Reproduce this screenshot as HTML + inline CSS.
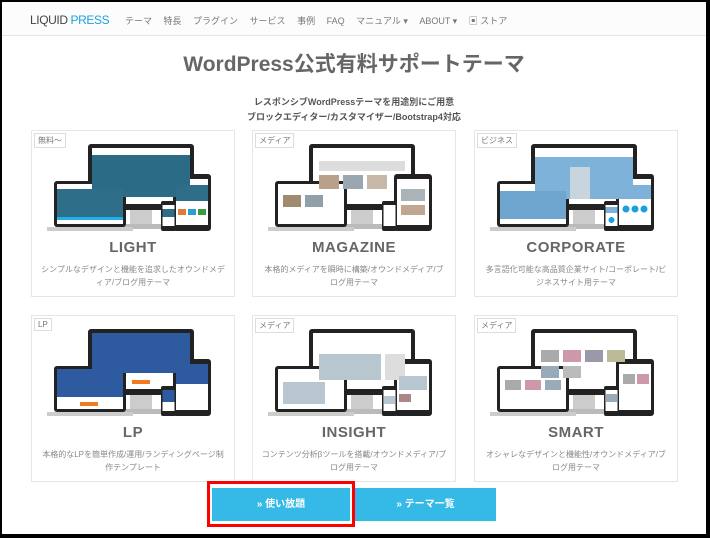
<!DOCTYPE html>
<html><head><meta charset="utf-8"><style>
*{margin:0;padding:0;box-sizing:border-box}
body{width:710px;height:538px;overflow:hidden;background:#000;font-family:"Liberation Sans","Noto Sans CJK JP",sans-serif;position:relative}
.page{position:absolute;left:2px;top:2px;width:704px;height:532px;background:#fff}
.nav{position:absolute;left:0;top:0;width:704px;height:34px;background:#fcfcfc;border-bottom:1px solid #e6e6e6}
.logo{position:absolute;left:28px;top:11px;font-size:12px;color:#444;letter-spacing:-.4px}
.logo b{font-weight:normal;color:#1aa3dc}
.menu{position:absolute;left:123px;top:12px;font-size:9px;color:#777;white-space:nowrap}
.menu span{margin-right:11.5px}
h1{position:absolute;left:0;width:704px;top:46px;text-align:center;font-size:21px;color:#666;font-weight:bold}
.sub{position:absolute;left:0;width:704px;top:93px;text-align:center;font-size:9px;color:#555;font-weight:bold;line-height:15px}
.card{position:absolute;width:204px;height:167px;border:1px solid #e6e6e6;background:#fff}
.tag{position:absolute;left:2px;top:2px;border:1px solid #ddd;font-size:8px;color:#777;padding:1px 3px;background:#fff}
.card svg{position:absolute;left:0;top:0}
.ttl{position:absolute;left:0;width:100%;top:108px;text-align:center;font-size:15px;font-weight:bold;color:#666;letter-spacing:.5px}
.desc{position:absolute;left:8px;right:8px;top:132px;text-align:center;font-size:8px;color:#888;line-height:13px}
.red{position:absolute;left:205px;top:479px;width:148px;height:46px;border:3px solid #f00}
.btn{position:absolute;top:486px;height:33px;background:#35bae8;color:#fff;font-size:10px;text-align:center;line-height:33px;font-weight:bold}
</style></head><body><div class="page">
<div class="nav"><div class="logo">LIQUID <b>PRESS</b></div>
<div class="menu"><span>テーマ</span><span>特長</span><span>プラグイン</span><span>サービス</span><span>事例</span><span>FAQ</span><span>マニュアル ▾</span><span>ABOUT ▾</span><span>▣ ストア</span></div></div>
<h1>WordPress公式有料サポートテーマ</h1>
<div class="sub">レスポンシブWordPressテーマを用途別にご用意<br>ブロックエディター/カスタマイザー/Bootstrap4対応</div>

<svg width="0" height="0" style="position:absolute"><defs>
<g id="dev">
<rect x="56" y="13" width="106" height="66" rx="3" fill="#222"/>
<rect x="60" y="17" width="98" height="56" fill="#fff"/>
<rect x="98" y="79" width="22" height="14" fill="#ccc"/><rect x="88" y="93" width="42" height="5" fill="#bbb"/>
<rect x="22" y="50" width="72" height="46" rx="3" fill="#222"/>
<rect x="25" y="53" width="66" height="40" fill="#fff"/>
<rect x="15" y="96" width="86" height="4" fill="#ccc"/>
<rect x="141" y="43" width="38" height="57" rx="3" fill="#222"/>
<rect x="144" y="48" width="32" height="46" fill="#fff"/>
<rect x="129" y="70" width="15" height="30" rx="2" fill="#222"/>
<rect x="130.5" y="74" width="12" height="21" fill="#fff"/>
</g></defs></svg>

<div class="card" style="left:29px;top:128px"><div class="tag">無料～</div>
<svg width="204" height="110"><use href="#dev"/><rect x="60" y="24" width="98" height="42" fill="#2b6b86"/><rect x="25" y="58" width="66" height="28" fill="#2e6e88"/><rect x="144" y="54" width="32" height="16" fill="#2e6e88"/><rect x="146" y="78" width="8" height="6" fill="#e07a3a"/><rect x="156" y="78" width="8" height="6" fill="#2aa0d0"/><rect x="166" y="78" width="8" height="6" fill="#3a9a40"/><rect x="130.5" y="78" width="12" height="8" fill="#2e6e88"/><rect x="25" y="86" width="66" height="3" fill="#22b0e8"/></svg>
<div class="ttl">LIGHT</div><div class="desc">シンプルなデザインと機能を追求したオウンドメディア/ブログ用テーマ</div></div>

<div class="card" style="left:250px;top:128px"><div class="tag">メディア</div>
<svg width="204" height="110"><use href="#dev"/><rect x="66" y="30" width="86" height="10" fill="#ddd"/><rect x="66" y="44" width="20" height="14" fill="#b9a08a"/><rect x="90" y="44" width="20" height="14" fill="#9aa7b0"/><rect x="114" y="44" width="20" height="14" fill="#c7b7a8"/><rect x="30" y="64" width="18" height="12" fill="#a08a70"/><rect x="52" y="64" width="18" height="12" fill="#8fa0a8"/><rect x="148" y="58" width="24" height="12" fill="#aab3b8"/><rect x="148" y="74" width="24" height="10" fill="#c0a890"/></svg>
<div class="ttl">MAGAZINE</div><div class="desc">本格的メディアを瞬時に構築/オウンドメディア/ブログ用テーマ</div></div>

<div class="card" style="left:472px;top:128px"><div class="tag">ビジネス</div>
<svg width="204" height="110"><use href="#dev"/><rect x="60" y="26" width="98" height="42" fill="#7fb2d8"/><rect x="95" y="36" width="20" height="32" fill="#c8d4de"/><rect x="25" y="60" width="66" height="28" fill="#6fa6d0"/><rect x="144" y="54" width="32" height="14" fill="#7fb2d8"/><circle cx="151" cy="78" r="3.5" fill="#1aa0e0"/><circle cx="160" cy="78" r="3.5" fill="#1aa0e0"/><circle cx="169" cy="78" r="3.5" fill="#1aa0e0"/><rect x="130.5" y="76" width="12" height="6" fill="#7fb2d8"/><circle cx="136.5" cy="89" r="3" fill="#1aa0e0"/></svg>
<div class="ttl">CORPORATE</div><div class="desc">多言語化可能な高品質企業サイト/コーポレート/ビジネスサイト用テーマ</div></div>

<div class="card" style="left:29px;top:313px"><div class="tag">LP</div>
<svg width="204" height="110"><use href="#dev"/><rect x="60" y="17" width="98" height="40" fill="#2e5ba0"/><rect x="25" y="53" width="66" height="28" fill="#2e5ba0"/><rect x="48" y="86" width="18" height="4" fill="#f07a20"/><rect x="144" y="48" width="32" height="20" fill="#2e5ba0"/><rect x="130.5" y="74" width="12" height="12" fill="#2e5ba0"/><rect x="100" y="64" width="18" height="4" fill="#f07a20"/></svg>
<div class="ttl">LP</div><div class="desc">本格的なLPを簡単作成/運用/ランディングページ制作テンプレート</div></div>

<div class="card" style="left:250px;top:313px"><div class="tag">メディア</div>
<svg width="204" height="110"><use href="#dev"/><rect x="66" y="38" width="62" height="26" fill="#b8c6d0"/><rect x="132" y="38" width="20" height="26" fill="#ddd"/><rect x="30" y="66" width="42" height="22" fill="#b8c6d0"/><rect x="146" y="60" width="28" height="14" fill="#b8c6d0"/><rect x="146" y="78" width="12" height="8" fill="#a88"/><rect x="131" y="80" width="11" height="8" fill="#b8c6d0"/></svg>
<div class="ttl">INSIGHT</div><div class="desc">コンテンツ分析βツールを搭載/オウンドメディア/ブログ用テーマ</div></div>

<div class="card" style="left:472px;top:313px"><div class="tag">メディア</div>
<svg width="204" height="110"><use href="#dev"/><rect x="66" y="34" width="18" height="12" fill="#aaa"/><rect x="88" y="34" width="18" height="12" fill="#c9a"/><rect x="110" y="34" width="18" height="12" fill="#99a"/><rect x="132" y="34" width="18" height="12" fill="#bb9"/><rect x="66" y="50" width="18" height="12" fill="#9ab"/><rect x="88" y="50" width="18" height="12" fill="#bbb"/><rect x="30" y="64" width="16" height="10" fill="#aaa"/><rect x="50" y="64" width="16" height="10" fill="#c9a"/><rect x="70" y="64" width="16" height="10" fill="#9ab"/><rect x="148" y="58" width="12" height="10" fill="#aaa"/><rect x="162" y="58" width="12" height="10" fill="#c9a"/><rect x="131" y="78" width="11" height="8" fill="#9ab"/></svg>
<div class="ttl">SMART</div><div class="desc">オシャレなデザインと機能性/オウンドメディア/ブログ用テーマ</div></div>

<div class="red"></div>
<div class="btn" style="left:210px;width:138px">» 使い放題</div>
<div class="btn" style="left:353px;width:141px">» テーマ一覧</div>
</div></body></html>
